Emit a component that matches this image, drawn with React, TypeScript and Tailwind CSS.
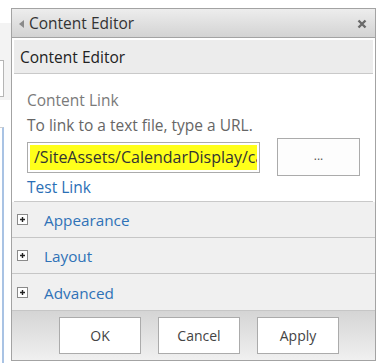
import React from "react";

const font = { fontFamily: '"Segoe UI", "Open Sans", "Noto Sans", sans-serif' };

function PlusBox() {
  return (
    <svg width="11" height="11" viewBox="0 0 11 11" className="shrink-0">
      <rect x="0.5" y="0.5" width="10" height="10" fill="#ffffff" stroke="#8a8a8a" />
      <path d="M3 5.5H8M5.5 3V8" stroke="#222" strokeWidth="1.4" />
    </svg>
  );
}

function Row({ label, last }: { label: string; last?: boolean }) {
  return (
    <div className={`flex items-center h-[36px] pl-[5px] ${last ? "" : "border-b border-[#c6c6c6]"}`}>
      <PlusBox />
      <span className="ml-[16px] text-[15.3px] text-[#2f72b7] leading-none pt-[3px]">{label}</span>
    </div>
  );
}

function Btn({ label }: { label: string }) {
  return (
    <div className="w-[82px] h-[37px] bg-white border border-[#ababab] flex items-center justify-center text-[14px] text-[#444]">
      {label}
    </div>
  );
}

export default function App() {
  return (
    <div className="w-[392px] h-[363px] bg-white flex overflow-hidden" style={font}>
      {/* left strip */}
      <div className="w-[11px] shrink-0 flex flex-col">
        <div className="h-[23px]" />
        <div className="h-[77px] bg-[#f3f3f3] flex flex-col">
          <div className="h-[37px]" />
          <div className="h-[37px] w-[4px] border-r border-y border-[#b5b5b5] bg-white" />
        </div>
        <div className="h-[27px]" />
        <div className="flex-1 w-[4px] border-t border-[#cfcfcf] border-r-2 border-r-[#a9c3e4]" />
      </div>

      {/* panel */}
      <div className="mt-[8px] mb-[2px] w-[365px] border border-[#a3a3a3] flex flex-col">
        {/* header */}
        <div className="h-[29px] shrink-0 bg-gradient-to-b from-[#ededed] to-[#d3d3d3] border-b border-[#a3a3a3] flex items-center pl-[7px] pr-[8px]">
          <svg width="5" height="8" viewBox="0 0 5 8" className="mr-[5px] mt-[1px]">
            <path d="M5 0V8L0 4Z" fill="#8a8a8a" />
          </svg>
          <span className="text-[15.5px] text-[#333] leading-none pt-[2px]">Content Editor</span>
          <svg width="10" height="10" viewBox="0 0 10 10" className="ml-auto mt-[1px]">
            <path d="M1.5 1.5L8.5 8.5M8.5 1.5L1.5 8.5" stroke="#6a6a6a" strokeWidth="2.4" />
          </svg>
        </div>

        {/* subheader */}
        <div className="px-[2px] pt-[2px] shrink-0">
          <div className="h-[34px] bg-[#ececec] border-b border-[#c9c9c9] flex items-center pl-[6px]">
            <span className="text-[15.5px] text-[#222] leading-none pt-[2px]">Content Editor</span>
          </div>
        </div>

        {/* content */}
        <div className="px-[2px] shrink-0">
          <div className="pl-[13px] pt-[16px] pb-[3px] border-b border-[#c9c9c9]">
            <div className="text-[15.5px] leading-[20px] text-[#7a7a7a]">Content Link</div>
            <div className="mt-[5px] text-[15.5px] leading-[20px] text-[#666]">To link to a text file, type a URL.</div>
            <div className="flex items-center mt-[3px]">
              <div className="w-[233px] h-[31px] border border-[#ababab] bg-white p-[2px] overflow-hidden">
                <div className="h-full bg-[#ffff1a] flex items-center pl-[4px] overflow-hidden whitespace-nowrap text-[16px] text-[#333]">
                  /SiteAssets/CalendarDisplay/calendar.html
                </div>
              </div>
              <div className="ml-[17px] w-[83px] h-[38px] border border-[#ababab] bg-[#fdfdfd] flex items-center justify-center text-[12px] text-[#555] pb-[2px]">
                ...
              </div>
            </div>
            <div className="text-[15.5px] leading-[22px] text-[#2a6fb6]">Test Link</div>
          </div>
        </div>

        {/* rows */}
        <div className="bg-[#f0f0f0] shrink-0 border-b border-[#c6c6c6]">
          <Row label="Appearance" />
          <Row label="Layout" />
          <Row label="Advanced" last />
        </div>

        {/* footer */}
        <div className="flex-1 bg-gradient-to-b from-[#d5d5d5] to-[#f0f0f0] flex items-center pl-[47px] gap-[17px]">
          <Btn label="OK" />
          <Btn label="Cancel" />
          <Btn label="Apply" />
        </div>
      </div>
    </div>
  );
}
